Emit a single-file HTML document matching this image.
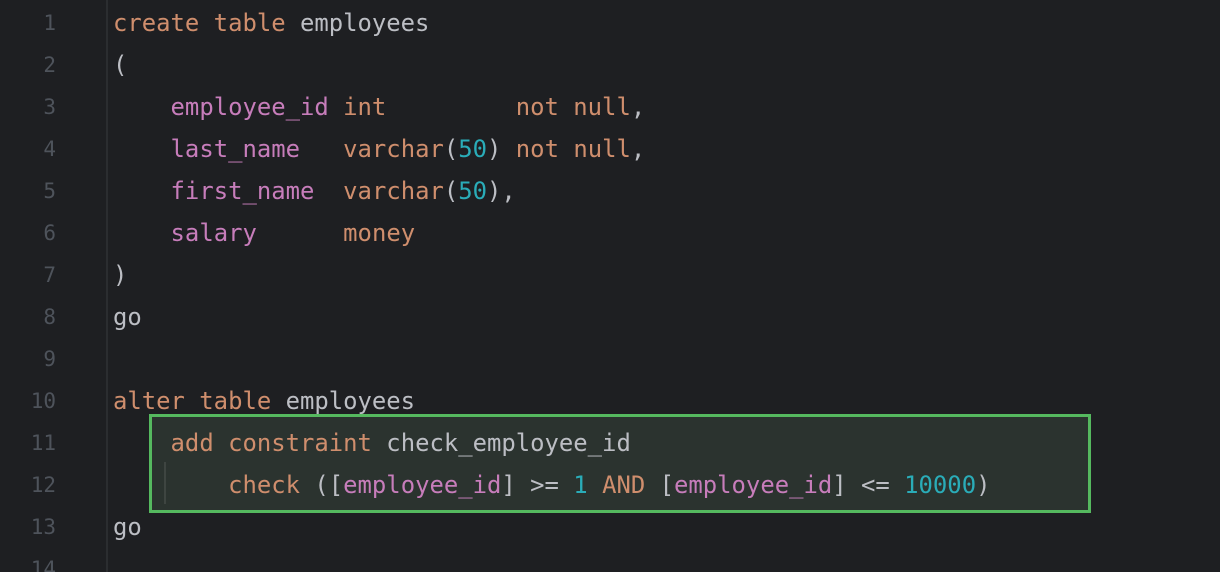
<!DOCTYPE html>
<html><head><style>
html,body{margin:0;width:1220px;height:572px;overflow:hidden}
body{background:#1e1f22;position:relative;font-family:"DejaVu Sans Mono","Liberation Mono",monospace;font-size:23.9px}
.gut{position:absolute;left:106px;top:0;width:2px;height:572px;background:#2b2d30}
.ln{position:absolute;left:0;width:56px;text-align:right;color:#4e535b;font-size:21px;line-height:42px}
.c{position:absolute;left:113px;line-height:42px;color:#bcbec4;white-space:pre}
.k{color:#cf8e6d}.p{color:#c77dbb}.n{color:#2aacb8}
.box{position:absolute;left:149px;top:414px;width:936px;height:93px;border:3px solid #55b95f;background:#2b332f}
.ig{position:absolute;left:164px;top:462px;width:2px;height:42px;background:#3e4541}
.t{position:absolute;left:0;top:2px;width:1220px;height:572px}
</style></head><body>
<div class="gut"></div>
<div class="box"></div><div class="ig"></div>
<div class="t">
<div class="ln" style="top:0">1</div>
<div class="ln" style="top:42px">2</div>
<div class="ln" style="top:84px">3</div>
<div class="ln" style="top:126px">4</div>
<div class="ln" style="top:168px">5</div>
<div class="ln" style="top:210px">6</div>
<div class="ln" style="top:252px">7</div>
<div class="ln" style="top:294px">8</div>
<div class="ln" style="top:336px">9</div>
<div class="ln" style="top:378px">10</div>
<div class="ln" style="top:420px">11</div>
<div class="ln" style="top:462px">12</div>
<div class="ln" style="top:504px">13</div>
<div class="ln" style="top:546px">14</div>
<div class="c" style="top:0"><span class="k">create table</span> employees</div>
<div class="c" style="top:42px">(</div>
<div class="c" style="top:84px">    <span class="p">employee_id</span> <span class="k">int         not null</span>,</div>
<div class="c" style="top:126px">    <span class="p">last_name</span>   <span class="k">varchar</span>(<span class="n">50</span>) <span class="k">not null</span>,</div>
<div class="c" style="top:168px">    <span class="p">first_name</span>  <span class="k">varchar</span>(<span class="n">50</span>),</div>
<div class="c" style="top:210px">    <span class="p">salary</span>      <span class="k">money</span></div>
<div class="c" style="top:252px">)</div>
<div class="c" style="top:294px">go</div>
<div class="c" style="top:378px"><span class="k">alter table</span> employees</div>
<div class="c" style="top:420px">    <span class="k">add constraint</span> check_employee_id</div>
<div class="c" style="top:462px">        <span class="k">check</span> ([<span class="p">employee_id</span>] &gt;= <span class="n">1</span> <span class="k">AND</span> [<span class="p">employee_id</span>] &lt;= <span class="n">10000</span>)</div>
<div class="c" style="top:504px">go</div>
</div>
</body></html>
